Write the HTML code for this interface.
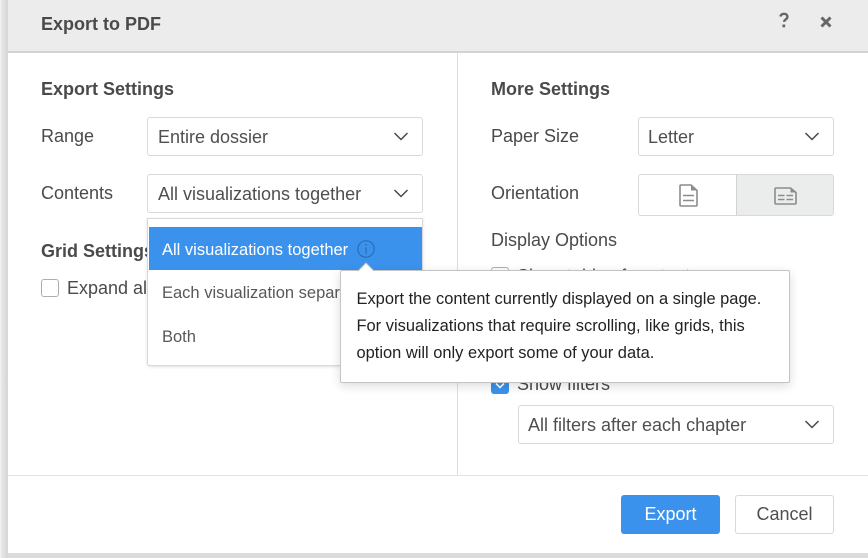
<!DOCTYPE html>
<html>
<head>
<meta charset="utf-8">
<style>
html,body{margin:0;padding:0}
body{width:868px;height:558px;overflow:hidden;position:relative;background:#dcdcdc;font-family:"Liberation Sans",Arial,sans-serif;color:#4a4a4c}
.a{position:absolute;white-space:nowrap}
#shade{left:0;top:0;width:8px;height:558px;background:linear-gradient(90deg,#f3f3f3 0,#e6e6e6 2px,#d8d8d8 7px)}
#dlg{left:8px;top:0;width:860px;height:553px;background:#fff}
#hd{left:8px;top:0;width:860px;height:51px;background:#ececec;border-bottom:2px solid #d3d3d3}
.t{font-size:18px;line-height:22px}
.b{font-weight:bold}
.sel{box-sizing:border-box;border:1px solid #d9d9d9;border-radius:3px;background:#fff;height:39px;font-size:18px;line-height:39px;padding-left:10px;color:#4f4f51}
.sel svg{position:absolute;right:13px;top:13px}
.cb{box-sizing:border-box;width:18px;height:18px;border:1.5px solid #aeaeae;border-radius:3px;background:#fff}
</style>
</head>
<body>
<div class="a" id="shade"></div>
<div class="a" id="dlg"></div>
<div class="a" id="hd"></div>
<div class="a b t" style="left:41px;top:13px;color:#4a4a4c">Export to PDF</div>
<svg class="a" style="left:775px;top:11px" width="18" height="20" viewBox="0 0 18 20"><path d="M5.500 5.600C5.800 3.600 7.200 2.800 9 2.800c2 0 3.400 1.100 3.400 2.900 0 1.500-.9 2.200-1.900 2.900-.9.600-1.300 1.100-1.300 2.300" fill="none" stroke="#666" stroke-width="2.400"/><rect x="7.400" y="13.500" width="2.800" height="2.800" fill="#666"/></svg>
<svg class="a" style="left:819px;top:15px" width="14" height="14" viewBox="0 0 14 14"><path d="M2.500 2.500l9 9M11.500 2.500l-9 9" stroke="#666" stroke-width="3"/></svg>

<div class="a" style="left:457px;top:53px;width:1px;height:422px;background:#dedede"></div>
<div class="a" style="left:8px;top:475px;width:860px;height:1px;background:#e2e2e2"></div>

<div class="a b t" style="left:41px;top:78px">Export Settings</div>
<div class="a t" style="left:41px;top:125px">Range</div>
<div class="a sel" style="left:147px;top:117px;width:276px">Entire dossier<svg width="16" height="11" viewBox="0 0 16 11"><path d="M1.500 2l6.500 6.500L14.500 2" fill="none" stroke="#4a4a4c" stroke-width="1.500"/></svg></div>
<div class="a t" style="left:41px;top:182px">Contents</div>
<div class="a sel" style="left:147px;top:174px;width:276px">All visualizations together<svg width="16" height="11" viewBox="0 0 16 11"><path d="M1.500 2l6.500 6.500L14.500 2" fill="none" stroke="#4a4a4c" stroke-width="1.500"/></svg></div>
<div class="a b t" style="left:41px;top:240px">Grid Settings</div>
<div class="a cb" style="left:41px;top:279px"></div>
<div class="a t" style="left:67px;top:277px">Expand all</div>

<div class="a b t" style="left:491px;top:78px">More Settings</div>
<div class="a t" style="left:491px;top:125px">Paper Size</div>
<div class="a sel" style="left:638px;top:117px;width:196px;padding-left:9px">Letter<svg width="16" height="11" viewBox="0 0 16 11"><path d="M1.500 2l6.500 6.500L14.500 2" fill="none" stroke="#4a4a4c" stroke-width="1.500"/></svg></div>
<div class="a t" style="left:491px;top:182px">Orientation</div>
<div class="a" style="box-sizing:border-box;left:638px;top:174px;width:196px;height:42px;border:1px solid #d9d9d9;border-radius:3px;background:#fff;overflow:hidden">
  <div class="a" style="left:97px;top:0;width:97px;height:40px;background:#ebecec;border-left:1px solid #d2d2d2"></div>
</div>
<svg class="a" style="left:679px;top:184px" width="19" height="23" viewBox="0 0 19 23"><path d="M1 2a1 1 0 0 1 1-1H12L18 6.500V21a1 1 0 0 1-1 1H2a1 1 0 0 1-1-1V2Z" fill="none" stroke="#8c8c8c" stroke-width="1.600"/><path d="M12 1L18 6.500H12Z" fill="#8c8c8c"/><path d="M4 11.500H15M4 16.500H15" stroke="#8c8c8c" stroke-width="1.400"/></svg>
<svg class="a" style="left:774px;top:187px" width="23" height="18" viewBox="0 0 23 18"><path d="M1 2a1 1 0 0 1 1-1H16.500L22 5.500V16a1 1 0 0 1-1 1H2a1 1 0 0 1-1-1V2Z" fill="none" stroke="#8c8c8c" stroke-width="1.600"/><path d="M16.500 1L22 5.500H16.500Z" fill="#8c8c8c"/><path d="M4 8.500H10.500M12.500 8.500H19M4 12.500H10.500M12.500 12.500H19" stroke="#8c8c8c" stroke-width="1.400"/></svg>
<div class="a t" style="left:491px;top:229px">Display Options</div>
<div class="a cb" style="left:491px;top:267px"></div>
<div class="a t" style="left:517px;top:265px">Show table of contents</div>
<div class="a" style="box-sizing:border-box;left:491px;top:376px;width:18px;height:18px;border-radius:3px;background:#3b92ec"></div>
<svg class="a" style="left:494px;top:381px" width="12" height="9" viewBox="0 0 12 9"><path d="M2 2.500l4 4 4-4" fill="none" stroke="#fff" stroke-width="1.600"/></svg>
<div class="a t" style="left:517px;top:373px">Show filters</div>
<div class="a sel" style="left:518px;top:405px;width:316px;padding-left:9px">All filters after each chapter<svg width="16" height="11" viewBox="0 0 16 11"><path d="M1.500 2l6.500 6.500L14.500 2" fill="none" stroke="#4a4a4c" stroke-width="1.500"/></svg></div>

<div class="a" style="box-sizing:border-box;left:621px;top:495px;width:99px;height:39px;background:#3b92ec;border-radius:3px;color:#fff;font-size:18px;line-height:39px;text-align:center">Export</div>
<div class="a" style="box-sizing:border-box;left:735px;top:495px;width:99px;height:39px;background:#fff;border:1px solid #d9d9d9;border-radius:3px;font-size:18px;line-height:37px;text-align:center;color:#4f4f51">Cancel</div>

<!-- dropdown -->
<div class="a" style="box-sizing:border-box;left:147px;top:218px;width:276px;height:148px;background:#fff;border:1px solid #d9d9d9;border-radius:0 0 3px 3px;box-shadow:0 1px 3px rgba(0,0,0,.12)">
  <div class="a" style="left:1px;top:8px;width:273px;height:43px;background:#3b92ec"></div>
  <div class="a" style="left:14px;top:21px;font-size:16.500px;line-height:21px;color:#fff">All visualizations together</div>
  <svg class="a" style="left:208px;top:20px" width="20" height="20" viewBox="0 0 20 20"><circle cx="10" cy="10" r="8.200" fill="none" stroke="#2c6cb0" stroke-width="1.200"/><path d="M10 8.500V15" stroke="#2c6cb0" stroke-width="1.200"/><rect x="9.300" y="5" width="1.400" height="1.600" fill="#2c6cb0"/></svg>
  <div class="a" style="left:14px;top:64px;font-size:16.500px;line-height:21px;color:#58585a">Each visualization separately</div>
  <div class="a" style="left:14px;top:108px;font-size:16.500px;line-height:21px;color:#58585a">Both</div>
</div>

<!-- tooltip -->
<div class="a" style="box-sizing:border-box;left:340px;top:270px;width:450px;height:113px;background:#fff;border:1px solid #c4c4c4;border-radius:2px;box-shadow:0 3px 10px rgba(0,0,0,.14);font-size:16.450px;line-height:27px;color:#222;padding:15px 0 0 15.500px">Export the content currently displayed on a single page.<br>For visualizations that require scrolling, like grids, this<br>option will only export some of your data.</div>
<svg class="a" style="left:356px;top:261px" width="20" height="11" viewBox="0 0 20 11"><path d="M2 10.500L10 2l8 8.500Z" fill="#fff"/><path d="M2 10L10 2l8 8" fill="none" stroke="#c4c4c4" stroke-width="1"/></svg>
</body>
</html>
